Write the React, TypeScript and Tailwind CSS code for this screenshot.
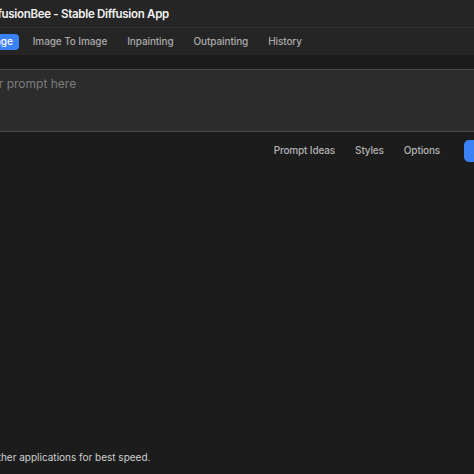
import React from "react";

export default function App() {
  const tabs = ["Image To Image", "Inpainting", "Outpainting", "History"];
  return (
    <div
      className="w-[474px] h-[474px] overflow-hidden bg-[#1c1c1c] flex flex-col"
      style={{ fontFamily: "Inter, 'Noto Sans', sans-serif" }}
    >
      {/* title bar */}
      <div className="h-[28px] shrink-0 bg-[#262526] border-b border-[#303030] flex items-center pt-[3px]">
        <div className="ml-[-17px] whitespace-nowrap text-[11.5px] font-semibold text-[#f2f2f2] tracking-[-0.3px]">
          DiffusionBee - Stable Diffusion App
        </div>
      </div>
      {/* tabs */}
      <div className="h-[27px] shrink-0 bg-[#262526] flex items-center gap-[8px] ml-[-59px] whitespace-nowrap">
        <div className="px-[6px] h-[16px] flex items-center rounded-[4px] bg-[#3b82f6] text-white text-[10px] font-medium tracking-[-0.1px]">
          Text To Image
        </div>
        {tabs.map((t) => (
          <div key={t} className="px-[6px] text-[10px] font-medium tracking-[-0.1px] text-[#a9a9a9]">
            {t}
          </div>
        ))}
      </div>
      <div className="h-[14px] shrink-0 bg-[#1c1c1c]" />
      {/* prompt box */}
      <div className="h-[63px] shrink-0 bg-[#2d2c2d] border-y border-[#4a4a4a] ml-[-10px] mr-[-10px]">
        <div className="ml-[-45px] pt-[5px] text-[12px] text-[#7c7c7c] whitespace-nowrap">
          Enter your prompt here
        </div>
      </div>
      {/* controls */}
      <div className="h-[37px] shrink-0 flex items-center justify-end mr-[-30px] gap-[20px] text-[10px] font-medium tracking-[-0.15px] text-[#b3b3b3]">
        <span>Prompt Ideas</span>
        <span>Styles</span>
        <span>Options</span>
        <div className="ml-[4px] w-[40px] h-[22px] rounded-[5px] bg-[#3b82f6]" />
      </div>
      <div className="flex-1" />
      <div className="h-[24px] shrink-0 ml-[-38px] text-[10px] text-[#d0d0d0] whitespace-nowrap">
        Close other applications for best speed.
      </div>
    </div>
  );
}
